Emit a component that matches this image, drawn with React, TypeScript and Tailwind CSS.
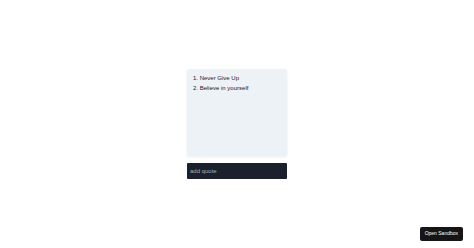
import { useState } from "react";

const quotes = ["Never Give Up", "Believe in yourself"];

export default function App() {
  const [value, setValue] = useState("");

  return (
    <div
      className="relative flex h-[248px] w-full items-center justify-center bg-white"
      style={{ fontFamily: '"Liberation Sans", Arial, sans-serif' }}
    >
      <div className="flex w-[100px] flex-col gap-[7px]">
        <div className="h-[87px] rounded-[2px] bg-[#edf2f7] px-[6px] py-[4px] shadow-[0_1px_3px_rgba(0,0,0,0.08)]">
          <ol className="text-[6px] leading-[10px] text-[#1a202c]">
            {quotes.map((q, i) => (
              <li key={q}>
                {i + 1}. {q}
              </li>
            ))}
          </ol>
        </div>
        <input
          value={value}
          onChange={(e) => setValue(e.target.value)}
          placeholder="add quote"
          className="h-[16px] w-full rounded-[1px] bg-[#1a202c] px-[3px] text-[6px] text-white outline-none placeholder:text-[#a0aec0]"
        />
      </div>

      <button className="absolute bottom-[7px] right-[11px] h-[14px] rounded-[2px] bg-[#151515] px-[5px] text-[5px] text-white">
        Open Sandbox
      </button>
    </div>
  );
}
